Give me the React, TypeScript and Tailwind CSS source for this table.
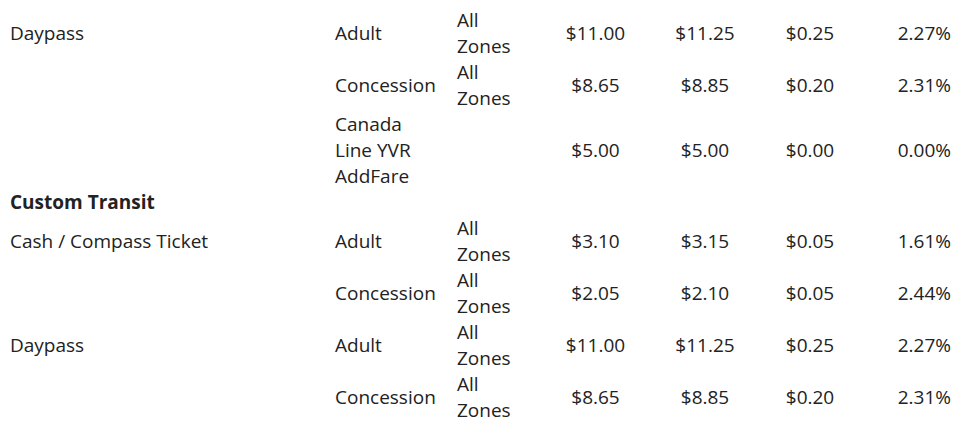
import React from "react";

type Row =
  | { kind: "head"; label: string }
  | { kind: "fare"; label?: string; type: string; zone?: string; oldFare: string; newFare: string; diff: string; pct: string };

const rows: Row[] = [
  { kind: "fare", label: "Daypass", type: "Adult", zone: "All Zones", oldFare: "$11.00", newFare: "$11.25", diff: "$0.25", pct: "2.27%" },
  { kind: "fare", type: "Concession", zone: "All Zones", oldFare: "$8.65", newFare: "$8.85", diff: "$0.20", pct: "2.31%" },
  { kind: "fare", type: "Canada Line YVR AddFare", oldFare: "$5.00", newFare: "$5.00", diff: "$0.00", pct: "0.00%" },
  { kind: "head", label: "Custom Transit" },
  { kind: "fare", label: "Cash / Compass Ticket", type: "Adult", zone: "All Zones", oldFare: "$3.10", newFare: "$3.15", diff: "$0.05", pct: "1.61%" },
  { kind: "fare", type: "Concession", zone: "All Zones", oldFare: "$2.05", newFare: "$2.10", diff: "$0.05", pct: "2.44%" },
  { kind: "fare", label: "Daypass", type: "Adult", zone: "All Zones", oldFare: "$11.00", newFare: "$11.25", diff: "$0.25", pct: "2.27%" },
  { kind: "fare", type: "Concession", zone: "All Zones", oldFare: "$8.65", newFare: "$8.85", diff: "$0.20", pct: "2.31%" },
];

export default function App() {
  return (
    <div className="w-[980px] h-[422px] bg-white overflow-hidden pt-[7px] text-[19px] leading-[26px] text-[#222]" style={{ fontFamily: '"Open Sans", "Noto Sans", sans-serif' }}>
      <table className="table-fixed border-collapse w-[980px]">
        <colgroup>
          <col className="w-[335px]" />
          <col className="w-[122px]" />
          <col className="w-[85px]" />
          <col className="w-[107px]" />
          <col className="w-[112px]" />
          <col className="w-[98px]" />
          <col />
        </colgroup>
        <tbody>
          {rows.map((r, i) =>
            r.kind === "head" ? (
              <tr key={i}>
                <td colSpan={7} className="p-0 pl-[10px] font-bold">{r.label}</td>
              </tr>
            ) : (
              <tr key={i} className="align-middle">
                <td className="p-0 pl-[10px]">{r.label}</td>
                <td className="p-0 pr-[17px]">{r.type}</td>
                <td className="p-0"><div className="w-[60px]">{r.zone}</div></td>
                <td className="p-0 text-center">{r.oldFare}</td>
                <td className="p-0 text-center">{r.newFare}</td>
                <td className="p-0 text-center">{r.diff}</td>
                <td className="p-0 text-right pr-[29px]">{r.pct}</td>
              </tr>
            )
          )}
        </tbody>
      </table>
    </div>
  );
}
